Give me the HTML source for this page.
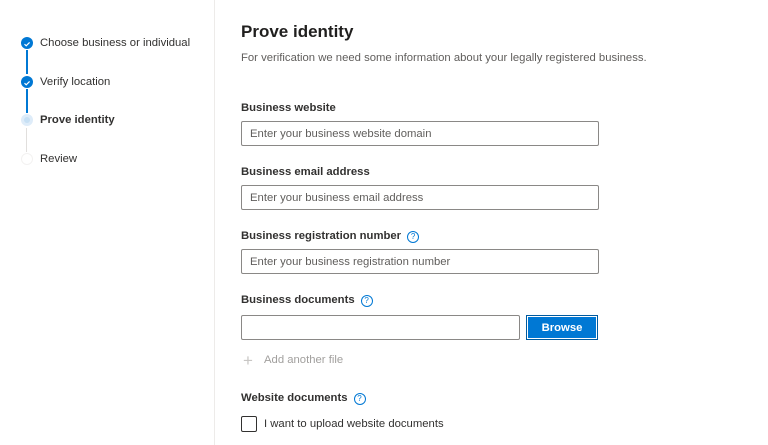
<!DOCTYPE html>
<html><head><style>
*{margin:0;padding:0;box-sizing:border-box}
body{width:768px;height:445px;background:#fff;font-family:"Liberation Sans",sans-serif;color:#323130;position:relative;overflow:hidden}
.a{position:absolute;white-space:nowrap}
.side{font-size:11.3px;color:#323130}
.lbl{font-size:11.3px;font-weight:bold;color:#323130}
.inp{position:absolute;border:1px solid #8a8886;border-radius:2px;height:25px;font-size:11.3px;color:#605e5c;padding:6px 8px;background:#fff}
.q{display:inline-block;width:12px;height:12px;border:1px solid #0078d4;border-radius:50%;color:#0078d4;font-size:8px;text-align:center;line-height:10px;margin-left:6px;vertical-align:0;font-weight:normal}
.dot{position:absolute;width:12px;height:12px;border-radius:50%}
</style></head><body>
<div class="a" style="left:214px;top:0;width:1px;height:445px;background:#edebe9"></div>
<div style="position:absolute;left:26px;top:50px;width:2px;height:24px;background:#0078d4"></div>
<div style="position:absolute;left:26px;top:89px;width:2px;height:24px;background:#0078d4"></div>
<div style="position:absolute;left:26px;top:128px;width:1px;height:24px;background:#e1dfdd"></div>
<div class="dot" style="left:21px;top:37px;background:#0078d4"><svg width="12" height="12" viewBox="0 0 12 12"><path d="M3.5 6.2l1.7 1.6 3.4-3.4" stroke="#fff" stroke-width="1.2" fill="none"/></svg></div>
<div class="dot" style="left:21px;top:76px;background:#0078d4"><svg width="12" height="12" viewBox="0 0 12 12"><path d="M3.5 6.2l1.7 1.6 3.4-3.4" stroke="#fff" stroke-width="1.2" fill="none"/></svg></div>
<div class="dot" style="left:21px;top:114px;background:#deecf9"><div style="position:absolute;left:3px;top:3px;width:6px;height:6px;border-radius:50%;background:#c7e0f4"></div></div>
<div class="dot" style="left:21px;top:153px;border:1px solid #f3f2f1"></div>
<div class="a side" style="left:40px;top:37px">Choose business or individual</div>
<div class="a side" style="left:40px;top:76px">Verify location</div>
<div class="a side" style="left:40px;top:114px;font-weight:bold">Prove identity</div>
<div class="a side" style="left:40px;top:153px">Review</div>
<div class="a" style="left:241px;top:22px;font-size:17px;font-weight:bold;color:#201f1e">Prove identity</div>
<div class="a" style="left:241px;top:52px;font-size:11.3px;color:#605e5c">For verification we need some information about your legally registered business.</div>
<div class="a lbl" style="left:241px;top:102px">Business website</div>
<div class="inp" style="left:241px;top:121px;width:358px">Enter your business website domain</div>
<div class="a lbl" style="left:241px;top:166px">Business email address</div>
<div class="inp" style="left:241px;top:185px;width:358px">Enter your business email address</div>
<div class="a lbl" style="left:241px;top:230px">Business registration number<span class="q">?</span></div>
<div class="inp" style="left:241px;top:249px;width:358px">Enter your business registration number</div>
<div class="a lbl" style="left:241px;top:294px">Business documents<span class="q">?</span></div>
<div class="inp" style="left:241px;top:315px;width:279px"></div>
<div class="a" style="left:526px;top:315px;width:72px;height:25px;background:#0078d4;border:1px solid #005a9e;box-shadow:inset 0 0 0 1px #fff;color:#fff;font-size:11.3px;font-weight:bold;display:flex;align-items:center;justify-content:center">Browse</div>
<div class="a" style="left:243px;top:354px;font-size:17px;color:#c8c6c4;line-height:14px">+</div>
<div class="a" style="left:264px;top:354px;font-size:11.3px;color:#a19f9d">Add another file</div>
<div class="a lbl" style="left:241px;top:392px">Website documents<span class="q">?</span></div>
<div class="a" style="left:241px;top:416px;width:16px;height:16px;border:1px solid #323130;border-radius:2px"></div>
<div class="a" style="left:264px;top:418px;font-size:11.3px;color:#323130">I want to upload website documents</div>
</body></html>
